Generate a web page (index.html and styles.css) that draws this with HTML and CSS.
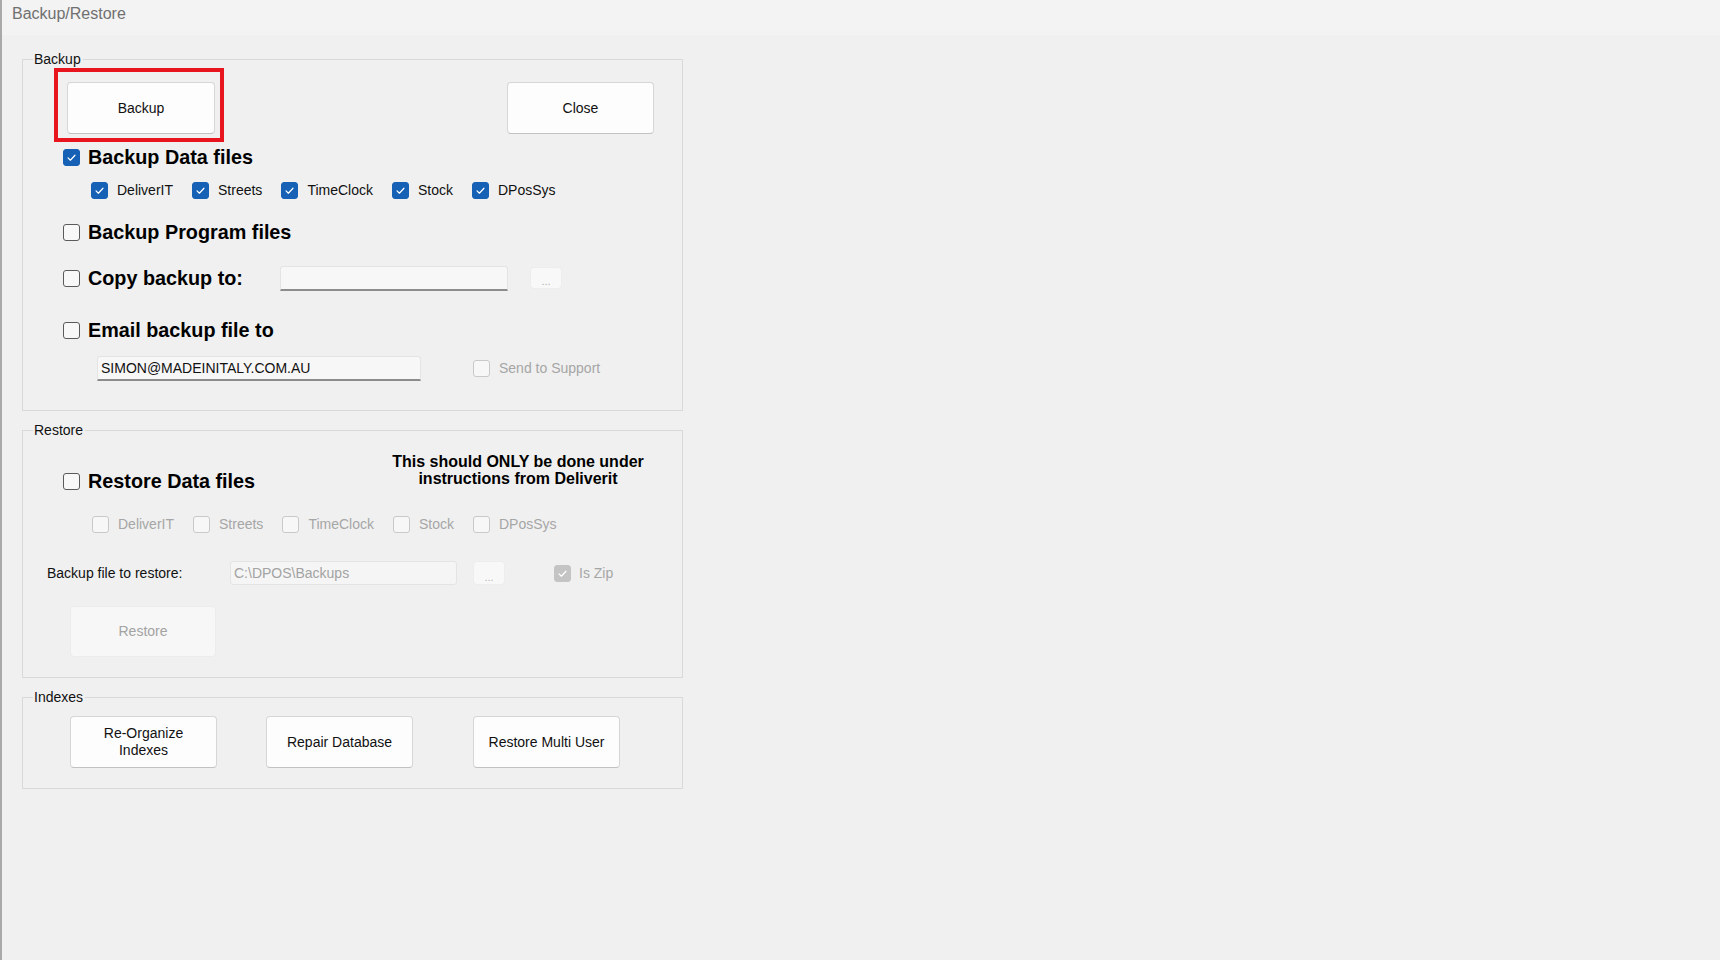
FILE: index.html
```html
<!DOCTYPE html>
<html>
<head>
  <meta charset="UTF-8">
  <title>Backup/Restore</title>
  <link rel="stylesheet" href="styles.css">
</head>
<body>
  <div class="titlebar">Backup/Restore</div>

  <div class="content">
    <!-- Backup -->
    <div class="group group-backup">
      <span class="group-title">Backup</span>

      <div class="row-buttons">
        <div class="highlight">
          <button class="btn">Backup</button>
        </div>
        <button class="btn btn-close">Close</button>
      </div>

      <div class="row row-data">
        <label class="opt opt-big"><span class="check checked"><svg viewBox="0 0 16 16"><path d="M4.3 8.4 L6.8 10.9 L11.7 5.6"/></svg></span>Backup Data files</label>
      </div>

      <div class="row row-subs">
        <label class="opt"><span class="check checked"><svg viewBox="0 0 16 16"><path d="M4.3 8.4 L6.8 10.9 L11.7 5.6"/></svg></span>DeliverIT</label>
        <label class="opt"><span class="check checked"><svg viewBox="0 0 16 16"><path d="M4.3 8.4 L6.8 10.9 L11.7 5.6"/></svg></span>Streets</label>
        <label class="opt"><span class="check checked"><svg viewBox="0 0 16 16"><path d="M4.3 8.4 L6.8 10.9 L11.7 5.6"/></svg></span>TimeClock</label>
        <label class="opt"><span class="check checked"><svg viewBox="0 0 16 16"><path d="M4.3 8.4 L6.8 10.9 L11.7 5.6"/></svg></span>Stock</label>
        <label class="opt"><span class="check checked"><svg viewBox="0 0 16 16"><path d="M4.3 8.4 L6.8 10.9 L11.7 5.6"/></svg></span>DPosSys</label>
      </div>

      <div class="row row-program">
        <label class="opt opt-big"><span class="check"></span>Backup Program files</label>
      </div>

      <div class="row row-copy">
        <label class="opt opt-big opt-copy"><span class="check"></span>Copy backup to:</label>
        <div class="textbox textbox-copy"></div>
        <button class="btn-browse">...</button>
      </div>

      <div class="row row-email">
        <label class="opt opt-big"><span class="check"></span>Email backup file to</label>
      </div>

      <div class="row row-address">
        <div class="textbox textbox-email">SIMON@MADEINITALY.COM.AU</div>
        <label class="opt opt-disabled opt-support"><span class="check"></span>Send to Support</label>
      </div>
    </div>

    <!-- Restore -->
    <div class="group group-restore">
      <span class="group-title">Restore</span>

      <div class="row-restore-head">
        <label class="opt opt-big opt-restore"><span class="check"></span>Restore Data files</label>
        <div class="warning">This should ONLY be done under<br>instructions from Deliverit</div>
      </div>

      <div class="row row-subs row-subs-off">
        <label class="opt opt-disabled"><span class="check"></span>DeliverIT</label>
        <label class="opt opt-disabled"><span class="check"></span>Streets</label>
        <label class="opt opt-disabled"><span class="check"></span>TimeClock</label>
        <label class="opt opt-disabled"><span class="check"></span>Stock</label>
        <label class="opt opt-disabled"><span class="check"></span>DPosSys</label>
      </div>

      <div class="row row-file">
        <span class="file-label">Backup file to restore:</span>
        <div class="textbox textbox-path">C:\DPOS\Backups</div>
        <button class="btn-browse btn-browse-path">...</button>
        <label class="opt opt-disabled opt-zip"><span class="check checked"><svg viewBox="0 0 16 16"><path d="M4.3 8.4 L6.8 10.9 L11.7 5.6"/></svg></span>Is Zip</label>
      </div>

      <div class="row-restore-btn">
        <button class="btn btn-disabled">Restore</button>
      </div>
    </div>

    <!-- Indexes -->
    <div class="group group-indexes">
      <span class="group-title">Indexes</span>
      <div class="row-index-buttons">
        <button class="btn btn-index">Re-Organize<br>Indexes</button>
        <button class="btn btn-index btn-repair">Repair Database</button>
        <button class="btn btn-index btn-multi">Restore Multi User</button>
      </div>
    </div>
  </div>
</body>
</html>
```

FILE: styles.css
```css
html, body {
  height: 100%;
}
body {
  margin: 0;
  background-color: #f0f0f0;
  border-left: 2px solid #a9a9a9;
  box-sizing: border-box;
  font-family: "Liberation Sans", Arial, sans-serif;
  font-size: 14px;
  color: #111111;
}
.titlebar {
  height: 35px;
  box-sizing: border-box;
  padding: 4px 0 0 10px;
  background-color: #f3f3f3;
  color: #707070;
  font-size: 16px;
  line-height: 20px;
}
.content {
  padding: 24px 0 0 20px;
}

/* group boxes */
.group {
  position: relative;
  width: 661px;
  box-sizing: border-box;
  border: 1px solid #d9d9d9;
  margin-bottom: 19px;
}
.group-title {
  position: absolute;
  top: -9px;
  left: 10px;
  padding: 0 2px 0 1px;
  background-color: #f0f0f0;
  line-height: 16px;
}
.group-backup {
  height: 352px;
}
.group-restore {
  height: 248px;
}
.group-indexes {
  height: 92px;
}

/* buttons */
button {
  font-family: "Liberation Sans", Arial, sans-serif;
  font-size: 14px;
  color: #111111;
  cursor: pointer;
}
.btn {
  display: block;
  width: 148px;
  height: 52px;
  padding: 0;
  background-color: #fdfdfd;
  border: 1px solid #d6d6d6;
  border-bottom-color: #c2c2c2;
  border-radius: 4px;
  line-height: 17px;
}
.btn-disabled {
  width: 146px;
  height: 51px;
  background-color: #f7f7f7;
  border-color: #ececec;
  color: #a3a3a3;
}
.btn-browse {
  width: 32px;
  height: 22px;
  padding: 6px 0 0;
  background-color: #f8f8f8;
  border: 1px solid #ededed;
  border-radius: 4px;
  color: #b3b3b3;
  font-size: 11px;
  line-height: 12px;
}

/* backup section */
.row-buttons {
  display: flex;
  align-items: flex-start;
  padding-top: 8px;
}
.highlight {
  margin-left: 31px;
  width: 170px;
  height: 74px;
  box-sizing: border-box;
  border: 4px solid #e8151f;
  padding: 10px 0 0 9px;
}
.btn-close {
  width: 147px;
  margin: 14px 0 0 283px;
}
.row {
  display: flex;
  align-items: center;
  height: 24px;
  padding-left: 40px;
}
.row-data {
  margin-top: 3px;
}
.row-subs {
  margin-top: 9px;
  padding-left: 68px;
  gap: 19px;
}
.row-program {
  margin-top: 18px;
}
.row-copy {
  margin-top: 21px;
  height: 26px;
}
.row-email {
  margin-top: 27px;
}
.row-address {
  margin-top: 13px;
  height: 26px;
  padding-left: 74px;
}

/* checkbox options */
.opt {
  display: flex;
  align-items: center;
  white-space: nowrap;
}
.check {
  display: flex;
  align-items: center;
  justify-content: center;
  width: 17px;
  height: 17px;
  box-sizing: border-box;
  margin-right: 9px;
  border: 1px solid #5a5a5a;
  border-radius: 3px;
  background-color: #f8f8f8;
}
.check svg {
  width: 15px;
  height: 15px;
}
.check path {
  fill: none;
  stroke: #ffffff;
  stroke-width: 1.3;
  stroke-linecap: round;
  stroke-linejoin: round;
}
.check.checked {
  background-color: #1660b6;
  border-color: #1660b6;
}
.opt-big {
  font-size: 19.8px;
  font-weight: bold;
  color: #000000;
}
.opt-big .check {
  margin-right: 8px;
}
.opt-disabled {
  color: #a6a6a6;
}
.opt-disabled .check {
  border-color: #c9c9c9;
  background-color: #f7f7f7;
}
.opt-disabled .check.checked {
  background-color: #c4c4c4;
  border-color: #c4c4c4;
}
.opt-copy {
  width: 217px;
}

/* text boxes */
.textbox {
  height: 25px;
  box-sizing: border-box;
  padding: 2px 0 0 3px;
  background-color: #f7f7f7;
  border: 1px solid #e4e4e4;
  border-bottom: 2px solid #8c8c8c;
  border-radius: 3px 3px 0 0;
  line-height: 18px;
}
.textbox-copy {
  width: 228px;
}
.row-copy .btn-browse {
  margin-left: 22px;
}
.textbox-email {
  width: 324px;
}
.opt-support {
  margin-left: 52px;
}

/* restore section */
.row-restore-head {
  display: flex;
  align-items: flex-start;
  padding: 22px 0 0 40px;
}
.opt-restore {
  margin-top: 17px;
}
.warning {
  margin-left: auto;
  margin-right: 19px;
  width: 290px;
  text-align: center;
  font-weight: bold;
  font-size: 16px;
  line-height: 17px;
  color: #000000;
}
.row-subs-off {
  margin-top: 19px;
  padding-left: 69px;
}
.row-file {
  margin-top: 24px;
  height: 26px;
  padding-left: 24px;
}
.file-label {
  width: 183px;
}
.textbox-path {
  width: 227px;
  height: 24px;
  padding-top: 2px;
  border-bottom: 1px solid #e4e4e4;
  border-radius: 3px;
  background-color: #f5f5f5;
  color: #a3a3a3;
}
.btn-browse-path {
  margin-left: 16px;
  height: 24px;
  padding-top: 8px;
}
.opt-zip {
  margin-left: 49px;
}
.opt-zip .check {
  margin-right: 8px;
}
.row-restore-btn {
  margin-top: 20px;
  padding-left: 47px;
}

/* indexes section */
.row-index-buttons {
  display: flex;
  padding: 18px 0 0 47px;
}
.btn-index {
  width: 147px;
}
.btn-repair {
  margin-left: 49px;
}
.btn-multi {
  margin-left: 60px;
}
```
